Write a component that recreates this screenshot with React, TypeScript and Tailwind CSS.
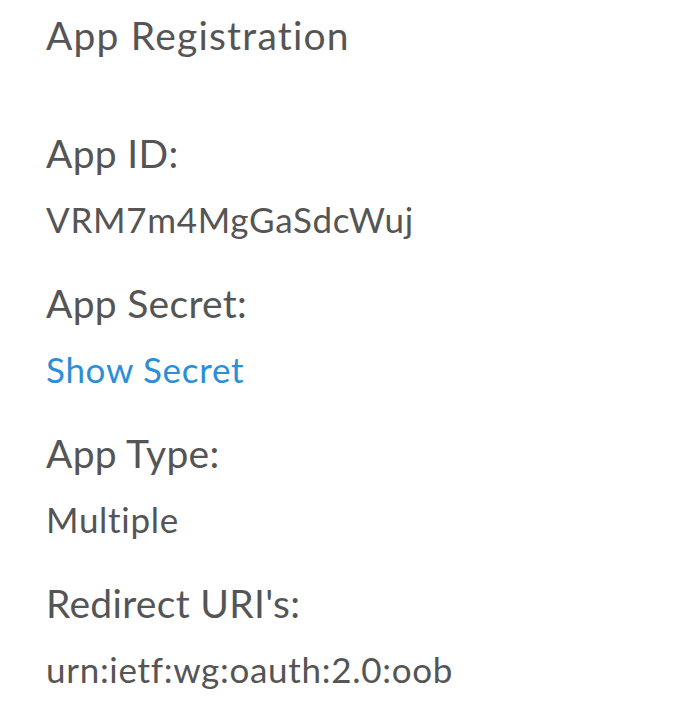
import React from 'react'

interface Field {
  label: string
  value: string
  link?: boolean
}

const fields: Field[] = [
  { label: 'App ID:', value: 'VRM7m4MgGaSdcWuj' },
  { label: 'App Secret:', value: 'Show Secret', link: true },
  { label: 'App Type:', value: 'Multiple' },
  { label: "Redirect URI's:", value: 'urn:ietf:wg:oauth:2.0:oob' },
]

const App: React.FC = () => {
  return (
    <div
      className="min-h-screen bg-white pl-[46px] pt-[11px] text-[#555555] [font-variant-ligatures:none]"
      style={{ fontFamily: 'Lato, "Noto Sans", sans-serif' }}>
      <h2 className="text-[39px] font-normal leading-[48px] tracking-[1.2px]">App Registration</h2>
      <div className="mt-[70px] flex flex-col gap-[36px]">
        {fields.map((f) => (
          <div key={f.label} className="flex flex-col gap-[18px]">
            <div className="text-[39px] leading-[48px] tracking-[0.3px]">{f.label}</div>
            {f.link ? (
              <a href="#" className="text-[35px] leading-[48px] tracking-[0.7px] text-[#2b8ed8]">
                {f.value}
              </a>
            ) : (
              <div className="text-[35px] leading-[48px] tracking-[0.7px]">{f.value}</div>
            )}
          </div>
        ))}
      </div>
    </div>
  )
}

export default App
